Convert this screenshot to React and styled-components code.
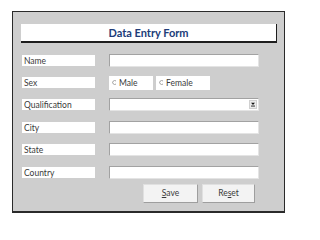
import React from "react";
import styled, { createGlobalStyle } from "styled-components";

const GlobalStyle = createGlobalStyle`
  html, body {
    margin: 0;
    padding: 0;
    background: #fff;
  }
  body {
    font-family: Lato, "Open Sans", sans-serif;
  }
`;

const fields = [
  { label: "Name", type: "text" },
  { label: "Sex", type: "radio" },
  { label: "Qualification", type: "select" },
  { label: "City", type: "text" },
  { label: "State", type: "text" },
  { label: "Country", type: "text" },
];

const DropArrow = () => (
  <svg width="7" height="7" viewBox="0 0 7 7">
    <polygon points="1.2,1.5 5.8,1.5 3.5,4" fill="#111" />
    <rect x="1.2" y="4.8" width="4.6" height="1" fill="#111" />
  </svg>
);

const RadioMark = () => (
  <svg width="5" height="5" viewBox="0 0 5 5">
    <path d="M4 1 A2 2 0 1 0 4 4" fill="none" stroke="#8a8a8a" strokeWidth="0.8" />
  </svg>
);

const App = () => {
  return (
    <>
      <GlobalStyle />
      <Panel>
        <Title>Data Entry Form</Title>
        <FormGrid>
          {fields.map((f) => (
            <React.Fragment key={f.label}>
              <Label>{f.label}</Label>
              {f.type === "text" && <TextBox />}
              {f.type === "radio" && (
                <RadioGroup>
                  <RadioBox width={44}>
                    <RadioMark />
                    Male
                  </RadioBox>
                  <RadioBox width={54}>
                    <RadioMark />
                    Female
                  </RadioBox>
                </RadioGroup>
              )}
              {f.type === "select" && (
                <SelectBox>
                  <ArrowButton>
                    <DropArrow />
                  </ArrowButton>
                </SelectBox>
              )}
            </React.Fragment>
          ))}
          <span />
          <Buttons>
            <Button width={55}>
              <u>S</u>ave
            </Button>
            <Button width={53}>
              Re<u>s</u>et
            </Button>
          </Buttons>
        </FormGrid>
      </Panel>
    </>
  );
};

const Panel = styled.div`
  box-sizing: border-box;
  margin: 11px 0 0 12px;
  width: 273px;
  height: 202px;
  background: #cecece;
  border-top: 1px solid #2a2a2a;
  border-right: 1.5px solid #2a2a2a;
  border-left: 1.5px solid #2a2a2a;
  border-bottom: 2px solid #2a2a2a;
  padding: 12px 7px 0 8px;
`;

const Title = styled.div`
  box-sizing: border-box;
  height: 19px;
  background: #fff;
  border-right: 1.5px solid #1e1e1e;
  border-bottom: 2px solid #1e1e1e;
  color: #203c78;
  font-weight: 700;
  font-size: 11px;
  line-height: 17px;
  text-align: center;
`;

const FormGrid = styled.div`
  display: grid;
  grid-template-columns: 73px 150px;
  column-gap: 14px;
  grid-auto-rows: 22.4px;
  align-items: center;
  margin-top: 6px;
  padding-left: 1px;
`;

const Label = styled.div`
  height: 11px;
  background: #fff;
  color: #3a3a3a;
  font-size: 8.5px;
  line-height: 12px;
  padding-left: 2px;
`;

const TextBox = styled.div`
  box-sizing: border-box;
  height: 13px;
  background: #fff;
  border-top: 1.5px solid #a2a2a2;
  border-left: 1.5px solid #a2a2a2;
  border-right: 1px solid #e4e4e4;
  border-bottom: 1px solid #e4e4e4;
`;

const SelectBox = styled(TextBox)`
  display: flex;
  justify-content: flex-end;
  align-items: center;
  padding-right: 1px;
`;

const ArrowButton = styled.div`
  box-sizing: border-box;
  width: 8px;
  height: 9px;
  background: #ececec;
  border: 1px solid #d0d0d0;
  display: flex;
  align-items: center;
  justify-content: center;
`;

const RadioGroup = styled.div`
  display: flex;
  gap: 3px;
`;

const RadioBox = styled.div`
  display: flex;
  align-items: center;
  gap: 2px;
  width: ${(p) => p.width}px;
  height: 14px;
  box-sizing: border-box;
  padding-left: 3px;
  background: #fff;
  color: #3a3a3a;
  font-size: 8.5px;
`;

const Buttons = styled.div`
  display: flex;
  justify-content: flex-end;
  gap: 4px;
  padding-right: 4px;
  align-self: start;
  margin-top: 1px;
`;

const Button = styled.div`
  box-sizing: border-box;
  width: ${(p) => p.width}px;
  height: 19px;
  background: #f3f3f3;
  border: 1px solid #e0e0e0;
  border-right-color: #9e9e9e;
  border-bottom-color: #9e9e9e;
  color: #3a3a3a;
  font-size: 8.5px;
  line-height: 17px;
  text-align: center;
`;

export default App;
